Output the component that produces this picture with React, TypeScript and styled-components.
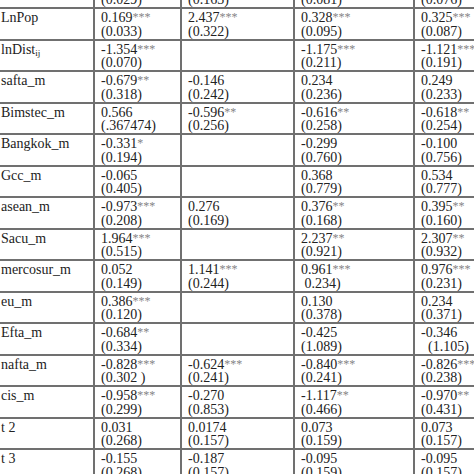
import React from "react";
import styled, { createGlobalStyle } from "styled-components";

const GlobalStyle = createGlobalStyle`
  html, body {
    margin: 0;
    padding: 0;
    background: #ffffff;
    overflow: hidden;
  }
`;

const Table = styled.table`
  border-collapse: collapse;
  table-layout: fixed;
  width: 540px;
  margin: -24.5px 0 0 -7px;
  font-family: "Liberation Serif", "Times New Roman", serif;
  font-size: 14px;
  line-height: 13.75px;
  color: #222222;
`;

const Col = styled.col<{ $w: number }>`
  width: ${(p) => p.$w}px;
`;

const Cell = styled.td`
  border: 2px solid #707070;
  padding: 2px 0 0 6px;
  vertical-align: top;
  white-space: pre;
  overflow: visible;
`;

const Line = styled.div`
  height: 13.75px;
`;

const Stars = styled.span`
  color: #858585;
  font-size: 12px;
  vertical-align: 1px;
`;

const Sub = styled.sub`
  font-size: 9px;
  vertical-align: -2px;
  line-height: 0;
`;

type Entry = [string, string] | null;

interface RowData {
  name: React.ReactNode;
  cells: Entry[];
}

const rows: RowData[] = [
  { name: "", cells: [["0.000", "(0.029)"], ["0.000", "(0.163)"], ["0.000", "(0.081)"], ["0.000", "(0.076)"]] },
  { name: "LnPop", cells: [["0.169***", "(0.033)"], ["2.437***", "(0.322)"], ["0.328***", "(0.095)"], ["0.325***", "(0.087)"]] },
  {
    name: (
      <>
        lnDist<Sub>ij</Sub>
      </>
    ),
    cells: [["-1.354***", "(0.070)"], null, ["-1.175***", "(0.211)"], ["-1.121***", "(0.191)"]],
  },
  { name: "safta_m", cells: [["-0.679**", "(0.318)"], ["-0.146", "(0.242)"], ["0.234", "(0.236)"], ["0.249", "(0.233)"]] },
  { name: "Bimstec_m", cells: [["0.566", "(.367474)"], ["-0.596**", "(0.256)"], ["-0.616**", "(0.258)"], ["-0.618**", "(0.254)"]] },
  { name: "Bangkok_m", cells: [["-0.331*", "(0.194)"], null, ["-0.299", "(0.760)"], ["-0.100", "(0.756)"]] },
  { name: "Gcc_m", cells: [["-0.065", "(0.405)"], null, ["0.368", "(0.779)"], ["0.534", "(0.777)"]] },
  { name: "asean_m", cells: [["-0.973***", "(0.208)"], ["0.276", "(0.169)"], ["0.376**", "(0.168)"], ["0.395**", "(0.160)"]] },
  { name: "Sacu_m", cells: [["1.964***", "(0.515)"], null, ["2.237**", "(0.921)"], ["2.307**", "(0.932)"]] },
  { name: "mercosur_m", cells: [["0.052", "(0.149)"], ["1.141***", "(0.244)"], ["0.961***", " 0.234)"], ["0.976***", "(0.231)"]] },
  { name: "eu_m", cells: [["0.386***", "(0.120)"], null, ["0.130", "(0.378)"], ["0.234", "(0.371)"]] },
  { name: "Efta_m", cells: [["-0.684**", "(0.334)"], null, ["-0.425", "(1.089)"], ["-0.346", "  (1.105)"]] },
  { name: "nafta_m", cells: [["-0.828***", "(0.302 )"], ["-0.624***", "(0.241)"], ["-0.840***", "(0.241)"], ["-0.826***", "(0.238)"]] },
  { name: "cis_m", cells: [["-0.958***", "(0.299)"], ["-0.270", "(0.853)"], ["-1.117**", "(0.466)"], ["-0.970**", "(0.431)"]] },
  { name: "t 2", cells: [["0.031", "(0.268)"], ["0.0174", "(0.157)"], ["0.073", "(0.159)"], ["0.073", "(0.157)"]] },
  { name: "t 3", cells: [["-0.155", "(0.268)"], ["-0.187", "(0.157)"], ["-0.095", "(0.159)"], ["-0.095", "(0.157)"]] },
];

const Coef = ({ text }: { text: string }) => {
  const m = text.match(/^([^*]*)(\**)$/);
  const num = m ? m[1] : text;
  const stars = m ? m[2] : "";
  return (
    <Line>
      {num}
      {stars && <Stars>{stars}</Stars>}
    </Line>
  );
};

export default function App() {
  return (
    <>
      <GlobalStyle />
      <Table>
        <colgroup>
          <Col $w={100} />
          <Col $w={87} />
          <Col $w={113} />
          <Col $w={120} />
          <Col $w={120} />
        </colgroup>
        <tbody>
          {rows.map((r, i) => (
            <tr key={i}>
              <Cell>
                <Line>{r.name}</Line>
                <Line />
              </Cell>
              {r.cells.map((c, j) => (
                <Cell key={j}>
                  {c ? (
                    <>
                      <Coef text={c[0]} />
                      <Line>{c[1]}</Line>
                    </>
                  ) : (
                    <>
                      <Line />
                      <Line />
                    </>
                  )}
                </Cell>
              ))}
            </tr>
          ))}
        </tbody>
      </Table>
    </>
  );
}
